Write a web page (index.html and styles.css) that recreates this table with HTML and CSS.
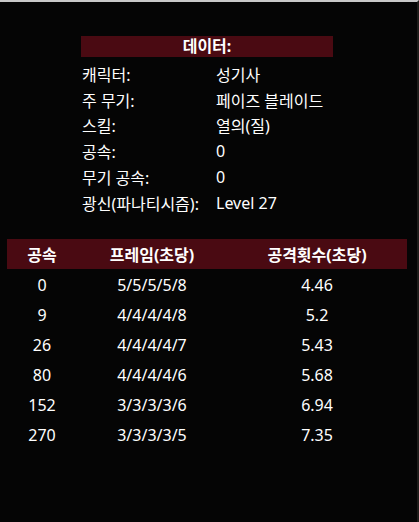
FILE: index.html
```html
<!DOCTYPE html>
<html lang="ko">
<head>
<meta charset="utf-8">
<link rel="stylesheet" href="styles.css">
</head>
<body>
<div class="frame">
  <section class="info">
    <div class="info-title">데이터:</div>
    <div class="info-grid">
      <div class="label">캐릭터:</div><div class="value">성기사</div>
      <div class="label">주 무기:</div><div class="value">페이즈 블레이드</div>
      <div class="label">스킬:</div><div class="value">열의(질)</div>
      <div class="label">공속:</div><div class="value">0</div>
      <div class="label">무기 공속:</div><div class="value">0</div>
      <div class="label">광신(파나티시즘):</div><div class="value">Level 27</div>
    </div>
  </section>
  <section class="table">
    <div class="thead">
      <div>공속</div><div>프레임(초당)</div><div>공격횟수(초당)</div>
    </div>
    <div class="tbody">
      <div>0</div><div>5/5/5/5/8</div><div>4.46</div>
      <div>9</div><div>4/4/4/4/8</div><div>5.2</div>
      <div>26</div><div>4/4/4/4/7</div><div>5.43</div>
      <div>80</div><div>4/4/4/4/6</div><div>5.68</div>
      <div>152</div><div>3/3/3/3/6</div><div>6.94</div>
      <div>270</div><div>3/3/3/3/5</div><div>7.35</div>
    </div>
  </section>
</div>
</body>
</html>
```
FILE: styles.css
```css
html, body {
  margin: 0;
  padding: 0;
  height: 100%;
}
body {
  background: #050505;
  color: #ffffff;
  font-family: "Noto Sans", "Noto Sans CJK KR", sans-serif;
  font-size: 16px;
  box-sizing: border-box;
  border-top: 2px solid #c9c9c9;
  border-right: 2px solid #1e1c1a;
  overflow: hidden;
}
.frame {
  padding-top: 34px;
}
.info {
  width: 252px;
  margin-left: 81px;
}
.info-title {
  background: #4a0a12;
  height: 21px;
  line-height: 21px;
  text-align: center;
  font-weight: bold;
}
.info-grid {
  margin-top: 4px;
  display: grid;
  grid-template-columns: 134px 1fr;
  grid-auto-rows: 25.8px;
  align-items: center;
  padding-left: 1px;
  white-space: nowrap;
}
.table {
  margin-top: 23px;
  margin-left: 7px;
  width: 400px;
}
.thead, .tbody {
  display: grid;
  grid-template-columns: 70px 150px 180px;
  text-align: center;
  align-items: center;
}
.thead {
  background: #4a0a12;
  height: 30px;
  font-weight: bold;
  margin-bottom: 1px;
}
.tbody {
  grid-auto-rows: 30px;
}
```
